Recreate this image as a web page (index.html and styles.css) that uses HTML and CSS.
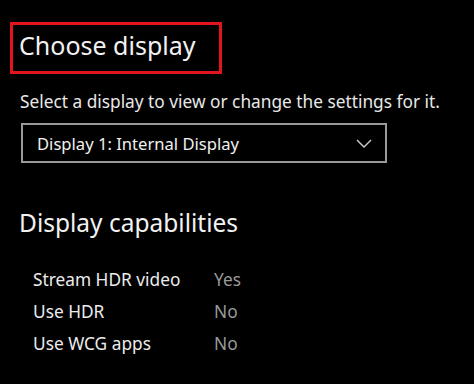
FILE: index.html
```html
<!DOCTYPE html>
<html lang="en">
  <head>
    <meta charset="UTF-8" />
    <title>Display settings</title>
    <link rel="stylesheet" href="styles.css">
  </head>
  <body>
    <div class="page">
      <!-- Choose display -->
      <div class="highlight">
        <h2 class="title">Choose display</h2>
      </div>
      <p class="label">Select a display to view or change the settings for it.</p>
      <div class="select">
        <span>Display 1: Internal Display</span>
        <svg class="chevron" width="16" height="9" viewBox="0 0 16 9">
          <path d="M1 1 L8 8 L15 1" fill="none" stroke="#d0d0d0" stroke-width="1.4" />
        </svg>
      </div>

      <!-- Capabilities -->
      <h2 class="section">Display capabilities</h2>
      <ul class="caps">
        <li><span class="cap-name">Stream HDR video</span><span class="cap-value">Yes</span></li>
        <li><span class="cap-name">Use HDR</span><span class="cap-value">No</span></li>
        <li><span class="cap-name">Use WCG apps</span><span class="cap-value">No</span></li>
      </ul>
    </div>
  </body>
</html>
```

FILE: styles.css
```css
body {
  margin: 0;
  padding: 0;
  background-color: #000;
  color: #fff;
  font-family: "Noto Sans", "Open Sans", sans-serif;
}

.page {
  width: 474px;
  height: 384px;
  padding: 22px 0 0 10px;
  box-sizing: border-box;
  overflow: hidden;
}

.highlight {
  width: 212px;
  height: 52px;
  box-sizing: border-box;
  border: 3px solid #e3141c;
  padding: 0 0 7px 6px;
  display: flex;
  align-items: center;
}

.title {
  margin: 0;
  font-weight: normal;
  font-size: 25px;
  line-height: 30px;
  color: #f2f2f2;
}

.label {
  margin: 17px 0 0 10px;
  font-size: 17.3px;
  line-height: 22px;
  white-space: nowrap;
  color: #e8e8e8;
}

.select {
  margin: 10px 0 0 11px;
  width: 366px;
  height: 40px;
  box-sizing: border-box;
  border: 2px solid #9a9a9a;
  display: flex;
  align-items: center;
  justify-content: space-between;
  padding: 0 13px 0 14px;
  font-size: 16.6px;
  color: #f0f0f0;
}

.chevron {
  display: block;
}

.section {
  margin: 45px 0 0 9px;
  font-weight: normal;
  font-size: 24.5px;
  line-height: 30px;
  color: #f2f2f2;
}

.caps {
  list-style: none;
  margin: 25px 0 0 23px;
  padding: 0;
}

.caps li {
  display: flex;
  height: 32px;
  align-items: center;
  font-size: 17.3px;
}

.cap-name {
  width: 181px;
  color: #ececec;
}

.cap-value {
  color: #9a9a9a;
}
```
